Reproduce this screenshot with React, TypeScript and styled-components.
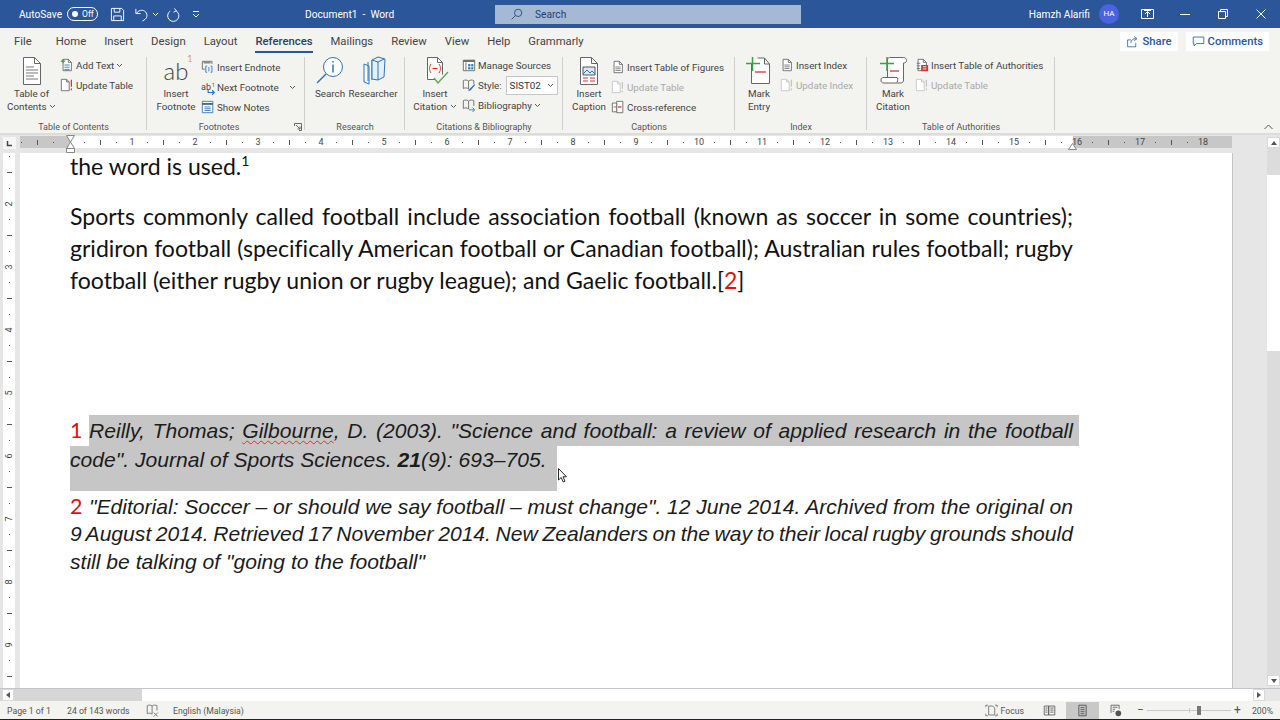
import React from 'react'
import styled, { createGlobalStyle } from 'styled-components'

const GlobalStyle = createGlobalStyle`
  html, body { margin: 0; padding: 0; background: #e6e6e6; overflow: hidden; }
  * { box-sizing: border-box; }
`

const UI_FONT = `Roboto, "Open Sans", "Liberation Sans", sans-serif`

const Chevron = ({ color = '#555' }: { color?: string }) => (
  <ChevronSvg viewBox="0 0 7 5" width="7" height="5">
    <path d="M1 1l2.500 2.500L6 1" fill="none" stroke={color} strokeWidth="1" />
  </ChevronSvg>
)

const Ico = ({ size = 14, children }: { size?: number; children: React.ReactNode }) => (
  <IconSvg viewBox="0 0 16 16" width={size} height={size} fill="none" strokeWidth="1">
    {children}
  </IconSvg>
)

const BigIco = ({ children }: { children: React.ReactNode }) => (
  <IconSvg viewBox="0 0 32 32" width="32" height="32" fill="none" strokeWidth="1">
    {children}
  </IconSvg>
)

const PageShape = ({ stroke = '#666' }: { stroke?: string }) => (
  <>
    <path d="M3.500 1.500h6l3.500 3.500v9.500h-9.500z" fill="#fff" stroke={stroke} />
    <path d="M9.500 1.500v3.500h3.500" stroke={stroke} />
  </>
)

const UpdateIcon = ({ off }: { off?: boolean }) => (
  <Ico>
    <path d="M1.500 1.500h6l3 3v10h-9z" fill="#fff" stroke={off ? '#c4c4c4' : '#666'} />
    <path d="M7.500 1.500v3h3" stroke={off ? '#c4c4c4' : '#666'} />
    <path d="M13 2v8M13 12v2" stroke={off ? '#c4c4c4' : '#d13438'} strokeWidth="1.400" />
  </Ico>
)

const LinesIcon = () => (
  <Ico>
    <PageShape />
    <path d="M5 8h6M5 10h6M5 12h6" stroke="#777" />
  </Ico>
)

const groups = {
  tabs: ['File', 'Home', 'Insert', 'Design', 'Layout', 'References', 'Mailings', 'Review', 'View', 'Help', 'Grammarly']
}

const TitleArea = () => (
  <TitleBar>
    <QuickAccess>
      <span>AutoSave</span>
      <Toggle>
        <Knob />
        Off
      </Toggle>
      <QuickIcon $left={12}>
        <Ico size={15}>
          <path d="M1.500 1.500h11l2 2v11h-13z M4.500 1.500v4h6v-4 M4 14.500v-5h8v5" stroke="#fff" />
        </Ico>
      </QuickIcon>
      <QuickIcon $left={9}>
        <Ico size={15}>
          <path d="M2 2v5h5" stroke="#fff" />
          <path d="M2.500 7c2-3.500 6-4.500 9-2.500s3 6.500.5 8.500L9 15" stroke="#fff" />
        </Ico>
      </QuickIcon>
      <QuickIcon $left={3}>
        <Chevron color="#fff" />
      </QuickIcon>
      <QuickIcon $left={7}>
        <Ico size={15}>
          <path d="M9 1.500l2 2.500-3 1.500" stroke="#fff" />
          <path d="M10.500 4a6 6 0 1 1-6 .3" stroke="#fff" />
        </Ico>
      </QuickIcon>
      <QuickIcon $left={11}>
        <IconSvg viewBox="0 0 8 8" width="8" height="8" fill="none">
          <path d="M1 1.500h6M1 4l3 3 3-3" stroke="#fff" />
        </IconSvg>
      </QuickIcon>
    </QuickAccess>
    <DocTitle>Document1&nbsp; -&nbsp; Word</DocTitle>
    <SearchBox>
      <Ico size={13}>
        <circle cx="10" cy="6" r="4.500" stroke="#1f3f73" />
        <path d="M6.800 9.200L2 14" stroke="#1f3f73" />
      </Ico>
      Search
    </SearchBox>
    <TitleSpacer />
    <UserName>Hamzh Alarifi</UserName>
    <Avatar>HA</Avatar>
    <WindowButton>
      <IconSvg viewBox="0 0 13 11" width="13" height="11" fill="none">
        <path d="M.5.500h12v9H.5z" stroke="#fff" />
        <path d="M6.500 8V3M4 5l2.500-2.500L9 5M3 1.500h7" stroke="#fff" />
      </IconSvg>
    </WindowButton>
    <WindowButton>
      <IconSvg viewBox="0 0 10 10" width="10" height="10">
        <path d="M0 5.500h10" stroke="#fff" />
      </IconSvg>
    </WindowButton>
    <WindowButton>
      <IconSvg viewBox="0 0 10 10" width="10" height="10" fill="none">
        <path d="M.5 2.500h7v7h-7zM2.500 2.500v-2h7v7h-2" stroke="#fff" />
      </IconSvg>
    </WindowButton>
    <WindowButton>
      <IconSvg viewBox="0 0 10 10" width="10" height="10">
        <path d="M.5.500l9 9M9.500.500l-9 9" stroke="#fff" />
      </IconSvg>
    </WindowButton>
  </TitleBar>
)

const TabArea = () => (
  <TabBar>
    {groups.tabs.map(t => (
      <Tab key={t} $active={t === 'References'} $file={t === 'File'}>
        {t}
      </Tab>
    ))}
    <TitleSpacer />
    <ShareButton>
      <Ico size={13}>
        <path d="M2 6h4M2 6v8.500h10V10" stroke="#2b579a" />
        <path d="M6 10c0-4 3-5.500 6-5.500M10 2l3.500 2.500L10 7" stroke="#2b579a" />
      </Ico>
      Share
    </ShareButton>
    <ShareButton>
      <Ico size={13}>
        <path d="M1.500 2.500h13v8h-9l-3 3v-3h-1z" stroke="#2b579a" />
      </Ico>
      Comments
    </ShareButton>
  </TabBar>
)

const RibbonArea = () => (
  <Ribbon>
    <Group $width={147}>
      <GroupBody $pad={8}>
        <LargeButton $width={47}>
          <BigIco>
            <path d="M7.500 2.500h11l6 6v21h-17z" fill="#fff" stroke="#666" />
            <path d="M18.500 2.500v6h6" stroke="#666" />
            <path d="M10 12h8M10 15h12M10 18h12M10 21h8M10 24h12" stroke="#777" />
          </BigIco>
          <LargeLabel>
            Table of
            <br />
            Contents <Chevron />
          </LargeLabel>
        </LargeButton>
        <SmallColumn $top={1} $left={5}>
          <SmallRow>
            <Ico>
              <PageShape />
              <path d="M5 8h6M5 10.500h6M5 13h6" stroke="#2e75b6" />
              <path d="M1 3.500h5M3.500 1v5" stroke="#3b9c4a" strokeWidth="1.300" />
            </Ico>
            Add Text <Chevron />
          </SmallRow>
          <SmallRow>
            <UpdateIcon />
            Update Table
          </SmallRow>
        </SmallColumn>
      </GroupBody>
      <GroupLabel>Table of Contents</GroupLabel>
    </Group>

    <Group $width={158}>
      <GroupBody $pad={8}>
        <LargeButton $width={42}>
          <AbGlyph>
            ab<AbMark>1</AbMark>
          </AbGlyph>
          <LargeLabel>
            Insert
            <br />
            Footnote
          </LargeLabel>
        </LargeButton>
        <SmallColumn $top={3}>
          <SmallRow>
            <Ico>
              <path d="M1.500 1.500h11v3M1.500 1.500v9h3" stroke="#666" />
              <path d="M3 3h8" stroke="#888" strokeWidth="2" />
              <path d="M7 7H5.500v7H7M11 7h1.500v7H11" stroke="#2e75b6" />
              <path d="M9 8v5" stroke="#2e75b6" />
            </Ico>
            Insert Endnote
          </SmallRow>
          <SmallRow>
            <SmallAb>
              ab<SmallAbMark>1</SmallAbMark>
              <Ico size={9}>
                <path d="M2 2v6h10M9 4l4 4-4 4" stroke="#2e75b6" strokeWidth="2" />
              </Ico>
            </SmallAb>
            Next Footnote
            <NextChevron>
              <Chevron />
            </NextChevron>
          </SmallRow>
          <SmallRow>
            <Ico>
              <path d="M1.500 1.500h12v13h-12z" fill="#fff" stroke="#2e75b6" />
              <path d="M1.500 4.500h12" stroke="#555" strokeWidth="2" />
              <path d="M4 8h7M4 10h7M4 12h7" stroke="#2e75b6" />
            </Ico>
            Show Notes
          </SmallRow>
        </SmallColumn>
      </GroupBody>
      <GroupLabel $shift={14}>Footnotes</GroupLabel>
      <Launcher>
        <IconSvg viewBox="0 0 8 8" width="8" height="8" fill="none">
          <path d="M.5 3V.5h7v7H5M2 2l4 4M6 3.500V6H3.500" stroke="#666" />
        </IconSvg>
      </Launcher>
    </Group>

    <Group $width={100}>
      <GroupBody $pad={9}>
        <LargeButton $width={32}>
          <BigIco>
            <circle cx="19" cy="12" r="9.500" stroke="#2e75b6" fill="#fff" />
            <path d="M12 19L3 28" stroke="#2e75b6" strokeWidth="1.500" />
            <path d="M19 9.500v8M19 6v1.500" stroke="#2e75b6" strokeWidth="1.500" />
          </BigIco>
          <LargeLabel>Search</LargeLabel>
        </LargeButton>
        <LargeButton $width={52} $left={1}>
          <BigIco>
            <path d="M7 9v18l5 2V11z" fill="#fff" stroke="#2e75b6" />
            <path d="M11 7v19M15 5v20" stroke="#2e75b6" />
            <path d="M15 5l6-3 7 2-1 18-6 3-6-1zM21 7l6-3M21 7v18M15 5l6 2" fill="#e4f0fa" stroke="#2e75b6" />
          </BigIco>
          <LargeLabel>Researcher</LargeLabel>
        </LargeButton>
      </GroupBody>
      <GroupLabel>Research</GroupLabel>
    </Group>

    <Group $width={158}>
      <GroupBody $pad={7}>
        <LargeButton $width={46}>
          <BigIco>
            <path d="M8.500 2.500h10l5 5v12M8.500 2.500v22h8" fill="#fff" stroke="#666" />
            <path d="M18.500 2.500v5h5" stroke="#666" />
            <path d="M12 9c-2 3-2 6 0 9M20 9c2 3 2 6 0 9M13.500 13.500h5" stroke="#d13438" />
            <path d="M15 23l4 5 10-11" stroke="#5aa85f" strokeWidth="1.300" />
          </BigIco>
          <LargeLabel>
            Insert
            <br />
            Citation <Chevron />
          </LargeLabel>
        </LargeButton>
        <SmallColumn $top={1}>
          <SmallRow>
            <Ico>
              <path d="M1.500 2.500h13v12h-13z" fill="#fff" stroke="#666" />
              <path d="M1.500 3.500h13" stroke="#666" strokeWidth="2" />
              <path d="M4.500 5v9" stroke="#666" />
              <path d="M7 7h6v6H7z" fill="#2e75b6" />
              <path d="M10 7v6M7 10h6" stroke="#fff" />
            </Ico>
            Manage Sources
          </SmallRow>
          <SmallRow>
            <Ico>
              <path d="M1.500 3c2-1 4-1 6 .5v9c-2-1.500-4-1.500-6-.5zM7.500 3.500c2-1.500 4-1.500 6-.5v4" stroke="#666" />
              <path d="M14 7l-6 6-1 2 3-1 5-6z" fill="#2e75b6" />
            </Ico>
            Style:
            <StyleSelect>
              SIST02
              <Chevron />
            </StyleSelect>
          </SmallRow>
          <SmallRow>
            <Ico>
              <path d="M1.500 3c2-1 4-1 6 .5v9c-2-1.500-4-1.500-6-.5zM7.500 3.500c2-1.500 4-1.500 6-.5v6" stroke="#666" />
              <path d="M8 13.500h6M12 11l2.500 2.500L12 16" stroke="#2e75b6" />
            </Ico>
            Bibliography <Chevron />
          </SmallRow>
        </SmallColumn>
      </GroupBody>
      <GroupLabel>Citations &amp; Bibliography</GroupLabel>
    </Group>

    <Group $width={172}>
      <GroupBody $pad={7}>
        <LargeButton $width={38}>
          <BigIco>
            <path d="M7.500 2.500h11l6 6v21h-17z" fill="#fff" stroke="#666" />
            <path d="M18.500 2.500v6h6" stroke="#666" />
            <path d="M10 12h12v8H10z" fill="#dbe8f5" stroke="#555" />
            <path d="M10 19l4-4 3 3 2-2 3 3" stroke="#2e75b6" />
            <path d="M10 23h5M17 23h5M10 26h5M17 26h5" stroke="#d13438" />
          </BigIco>
          <LargeLabel>
            Insert
            <br />
            Caption
          </LargeLabel>
        </LargeButton>
        <SmallColumn $top={3} $left={3}>
          <SmallRow>
            <LinesIcon />
            Insert Table of Figures
          </SmallRow>
          <SmallRow $off>
            <UpdateIcon off />
            Update Table
          </SmallRow>
          <SmallRow>
            <Ico>
              <path d="M6.500 1.500h7v13h-7z" fill="#fff" stroke="#666" />
              <path d="M1.500 3.500h5v10h-5z" fill="#fff" stroke="#666" />
              <path d="M8 8h4" stroke="#d13438" strokeWidth="1.500" />
              <path d="M3 8h3" stroke="#d13438" />
            </Ico>
            Cross-reference
          </SmallRow>
        </SmallColumn>
      </GroupBody>
      <GroupLabel>Captions</GroupLabel>
    </Group>

    <Group $width={132}>
      <GroupBody $pad={8}>
        <LargeButton $width={32}>
          <BigIco>
            <path d="M8.500 8.500v20h18V9l-5-6h-7" fill="#fff" stroke="#666" />
            <path d="M21.500 3v6h5" stroke="#666" />
            <path d="M3 8.500h14M9.500 2v14" stroke="#3b9c4a" strokeWidth="1.500" />
            <path d="M12 17h11" stroke="#d13438" strokeWidth="1.300" />
          </BigIco>
          <LargeLabel>
            Mark
            <br />
            Entry
          </LargeLabel>
        </LargeButton>
        <SmallColumn $top={1} $left={5}>
          <SmallRow>
            <LinesIcon />
            Insert Index
          </SmallRow>
          <SmallRow $off>
            <UpdateIcon off />
            Update Index
          </SmallRow>
        </SmallColumn>
      </GroupBody>
      <GroupLabel>Index</GroupLabel>
    </Group>

    <Group $width={188}>
      <GroupBody $pad={8}>
        <LargeButton $width={36}>
          <BigIco>
            <path d="M10.500 5c0-2 1-2.500 2-2.500h14c2 0 3 1.500 3 3s-1 2.500-3 2.500v17c0 2-1 3-3 3H7c-2 0-3-1-3-3s1-2.500 3-2.500h13c1 0 1 3 0 5" fill="#fff" stroke="#666" />
            <path d="M10.500 5v18" stroke="#666" />
            <path d="M3 8.500h14M10 2v14" stroke="#3b9c4a" strokeWidth="1.500" />
            <path d="M13 16h9" stroke="#d13438" strokeWidth="1.300" />
          </BigIco>
          <LargeLabel>
            Mark
            <br />
            Citation
          </LargeLabel>
        </LargeButton>
        <SmallColumn $top={1} $left={4}>
          <SmallRow>
            <Ico>
              <PageShape />
              <path d="M2 6h4M2 9h4M2 12h4" stroke="#666" />
              <path d="M7 8h8v7H7z" fill="#d13438" />
              <path d="M9 10h4M9 12.500h4" stroke="#fff" />
            </Ico>
            Insert Table of Authorities
          </SmallRow>
          <SmallRow $off>
            <UpdateIcon off />
            Update Table
          </SmallRow>
        </SmallColumn>
      </GroupBody>
      <GroupLabel>Table of Authorities</GroupLabel>
    </Group>

    <RibbonCollapse>
      <IconSvg viewBox="0 0 9 6" width="9" height="6" fill="none">
        <path d="M.5 5L4.500 1 8.500 5" stroke="#555" />
      </IconSvg>
    </RibbonCollapse>
  </Ribbon>
)

// one entry per quarter unit, the whole numbers carry their label
const marksFrom = (first: number, count: number) =>
  Array.from({ length: count }, (_, i) => {
    const pos = first + i
    if (pos % 4 === 0) return pos === 0 ? '' : String(Math.abs(pos / 4))
    return Math.abs(pos % 4) === 2 ? 'tick' : 'dot'
  })

const RulerMarks = ({ marks, vertical }: { marks: string[]; vertical?: boolean }) => (
  <>
    {marks.map((m, i) => (
      <RulerSlot key={i} $vertical={vertical}>
        {m === 'tick' && <RulerTick $vertical={vertical} />}
        {m === 'dot' && <RulerDot />}
        {m !== 'tick' && m !== 'dot' && <RulerNumber $vertical={vertical}>{m}</RulerNumber>}
      </RulerSlot>
    ))}
  </>
)

const FootnoteOne = () => (
  <>
    <SelectedRow>
      <NoteMark>1</NoteMark>
      <SelectedFirst>
        Reilly, Thomas; <Misspelt>Gilbourne</Misspelt>, D. (2003). "Science and football: a review of applied research in the football
      </SelectedFirst>
    </SelectedRow>
    <SelectedSecond>
      code". Journal of Sports Sciences. <strong>21</strong>(9): 693–705.
      <Pointer viewBox="0 0 9 15" width="9" height="15">
        <path d="M.5.500v11.500l2.700-2.500 2 4.500 1.800-.8-2-4.400h3.500z" fill="#fff" stroke="#111" strokeWidth="0.900" />
      </Pointer>
    </SelectedSecond>
  </>
)

const DocumentPage = () => (
  <Page>
    <FirstLine>
      the word is used.<Super>1</Super>
    </FirstLine>
    <BodyLine $justify>
      Sports commonly called football include association football (known as soccer in some countries);
    </BodyLine>
    <BodyLine $justify>
      gridiron football (specifically American football or Canadian football); Australian rules football; rugby
    </BodyLine>
    <BodyLine>
      football (either rugby union or rugby league); and Gaelic football.[<RedNumber>2</RedNumber>]
    </BodyLine>
    <FootnoteBlock>
      <FootnoteOne />
      <NoteLine $justify>
        <NoteMark>2</NoteMark>
        <em>"Editorial: Soccer – or should we say football – must change". 12 June 2014. Archived from the original on</em>
      </NoteLine>
      <NoteLine $justify>
        <em>9 August 2014. Retrieved 17 November 2014. New Zealanders on the way to their local rugby grounds should</em>
      </NoteLine>
      <NoteLine>
        <em>still be talking of "going to the football"</em>
      </NoteLine>
    </FootnoteBlock>
  </Page>
)

const StatusArea = () => (
  <StatusBar>
    <StatusText $width={60}>Page 1 of 1</StatusText>
    <StatusText $width={79}>24 of 143 words</StatusText>
    <StatusIcon $width={27}>
      <Ico size={13}>
        <path d="M1.500 2c2-1 4-1 6 .5v10c-2-1.500-4-1.500-6-.5zM7.500 2.500c2-1.500 4-1.500 6-.5v6" stroke="#666" />
        <path d="M9.500 10.500l5 5M14.500 10.500l-5 5" stroke="#666" />
      </Ico>
    </StatusIcon>
    <StatusText>English (Malaysia)</StatusText>
    <TitleSpacer />
    <FocusItem>
      <Ico size={13}>
        <path d="M1 4V1.500h2.500M15 4V1.500h-2.500M1 12v2.500h2.500M15 12v2.500h-2.500" stroke="#666" />
        <path d="M4.500 2.500h5l2.500 2.500v8.500H4.500z" stroke="#666" />
      </Ico>
      Focus
    </FocusItem>
    <ViewButton>
      <Ico size={13}>
        <path d="M1.500 2.500h5.500v11H1.500zM7 2.500h7.500v11H7zM3 5h2.500M3 7.500h2.500M3 10h2.500M9 5h4M9 7.500h4M9 10h4" stroke="#555" />
      </Ico>
    </ViewButton>
    <ViewButton $active>
      <Ico size={13}>
        <path d="M3.500 1.500h9v13h-9zM5.500 4.500h5M5.500 7h5M5.500 9.500h5M5.500 12h5" stroke="#444" />
      </Ico>
    </ViewButton>
    <ViewButton>
      <Ico size={13}>
        <path d="M2.500 11V1.500h10V6M4.500 4h6M4.500 6.500h3M4.500 9h2" stroke="#555" />
        <circle cx="11.500" cy="11.500" r="3.500" fill="#555" />
      </Ico>
    </ViewButton>
    <ZoomSign $left={4}>−</ZoomSign>
    <ZoomTrack>
      <ZoomThumb />
    </ZoomTrack>
    <ZoomSign>+</ZoomSign>
    <ZoomValue>200%</ZoomValue>
  </StatusBar>
)

const App: React.FunctionComponent = () => (
  <Window>
    <GlobalStyle />
    <TitleArea />
    <TabArea />
    <RibbonArea />
    <RibbonEdge />
    <Workspace>
      <WorkColumn>
        <RulerRow>
          <TabStopCorner>
            <IconSvg viewBox="0 0 7 7" width="7" height="7" fill="none">
              <path d="M1.500 1v4.500H6" stroke="#444" strokeWidth="1.500" />
            </IconSvg>
          </TabStopCorner>
          <RulerStrip>
            <RulerInner>
              <RulerMarks marks={marksFrom(-3, 76)} />
            </RulerInner>
            <IndentLeft viewBox="0 0 9 18" width="9" height="18">
              <path d="M.5.500h8L4.500 7zM4.500 7l4 6.500h-8zM.5 13.500h8v4h-8z" fill="#fff" stroke="#888" />
            </IndentLeft>
            <IndentRight viewBox="0 0 9 7" width="9" height="7">
              <path d="M4.500.500l4 6h-8z" fill="#fff" stroke="#888" />
            </IndentRight>
          </RulerStrip>
        </RulerRow>
        <DocRow>
          <SideRuler>
            <SideRulerInner>
              <RulerMarks marks={marksFrom(5, 34)} vertical />
            </SideRulerInner>
          </SideRuler>
          <DocumentPage />
        </DocRow>
      </WorkColumn>
      <VScroll>
        <ScrollButton>
          <ArrowUp />
        </ScrollButton>
        <VTrack>
          <VThumb />
        </VTrack>
        <ScrollButton>
          <ArrowDown />
        </ScrollButton>
      </VScroll>
    </Workspace>
    <HScroll>
      <HButton>
        <ArrowLeft />
      </HButton>
      <HThumb />
      <HButton>
        <ArrowRight />
      </HButton>
    </HScroll>
    <StatusArea />
  </Window>
)

const Window = styled.div`
  width: 1280px;
  height: 720px;
  display: flex;
  flex-direction: column;
  overflow: hidden;
  font-family: ${UI_FONT};
  background: #e6e6e6;
  border-bottom: 1px solid #222;
`

const IconSvg = styled.svg`
  display: block;
  flex: none;
`

const ChevronSvg = styled.svg`
  display: inline-block;
  flex: none;
  vertical-align: 1px;
`

const TitleBar = styled.div`
  height: 28px;
  flex: none;
  display: flex;
  align-items: center;
  background: #2b579a;
  color: #fff;
  font-size: 10.2px;
`

const QuickAccess = styled.div`
  width: 305px;
  padding-left: 19px;
  display: flex;
  align-items: center;
`

const Toggle = styled.span`
  width: 31px;
  height: 14px;
  margin-left: 5px;
  padding-left: 14px;
  border: 1px solid #fff;
  border-radius: 7px;
  position: relative;
  font-size: 8.5px;
  line-height: 12px;
`

const Knob = styled.span`
  position: absolute;
  left: 4px;
  top: 3px;
  width: 6px;
  height: 6px;
  border-radius: 50%;
  background: #fff;
`

const QuickIcon = styled.span<{ $left: number }>`
  margin-left: ${p => p.$left}px;
  display: flex;
`

const DocTitle = styled.div`
  width: 190px;
  white-space: nowrap;
`

const SearchBox = styled.div`
  width: 306px;
  height: 19px;
  padding-left: 15px;
  display: flex;
  align-items: center;
  gap: 12px;
  background: #a5b9d5;
  color: #1f3f73;
`

const TitleSpacer = styled.div`
  flex: 1;
`

const UserName = styled.div`
  white-space: nowrap;
`

const Avatar = styled.div`
  width: 20px;
  height: 20px;
  margin: 0 9px;
  border-radius: 50%;
  background: #4a63e0;
  font-size: 8px;
  line-height: 20px;
  text-align: center;
`

const WindowButton = styled.div`
  width: 38px;
  height: 28px;
  display: flex;
  align-items: center;
  justify-content: center;
`

const TabBar = styled.div`
  height: 26px;
  flex: none;
  display: flex;
  align-items: center;
  padding: 0 11px 0 14px;
  gap: 18px;
  background: #f3f3ef;
`

const Tab = styled.div<{ $active?: boolean; $file?: boolean }>`
  height: 24px;
  margin-right: ${p => (p.$file ? 6 : 0)}px;
  font-size: 11.3px;
  line-height: 26px;
  white-space: nowrap;
  color: ${p => (p.$active ? '#2f3f5c' : '#444')};
  font-weight: ${p => (p.$active ? 500 : 400)};
  border-bottom: 2px solid ${p => (p.$active ? '#2b579a' : 'transparent')};
`

const ShareButton = styled.div`
  height: 19px;
  margin-left: -10px;
  padding: 0 6px;
  display: flex;
  align-items: center;
  gap: 3px;
  background: #fff;
  color: #2b579a;
  font-size: 11.3px;
  font-weight: 500;
`

const Ribbon = styled.div`
  height: 79px;
  flex: none;
  display: flex;
  position: relative;
  background: #f3f3ef;
  color: #444;
  font-size: 9.8px;
`

const Group = styled.div<{ $width: number }>`
  width: ${p => p.$width}px;
  flex: none;
  display: flex;
  flex-direction: column;
  position: relative;
  &::after {
    content: '';
    position: absolute;
    right: 0;
    top: 3px;
    bottom: 3px;
    width: 1px;
    background: #cfcfcb;
  }
`

const GroupBody = styled.div<{ $pad: number }>`
  height: 67px;
  padding-left: ${p => p.$pad}px;
  display: flex;
`

const GroupLabel = styled.div<{ $shift?: number }>`
  height: 12px;
  padding-right: ${p => p.$shift || 0}px;
  text-align: center;
  font-size: 9px;
  line-height: 12px;
  color: #555;
  white-space: nowrap;
`

const Launcher = styled.span`
  position: absolute;
  right: 3px;
  bottom: 2px;
`

const LargeButton = styled.div<{ $width: number; $left?: number }>`
  width: ${p => p.$width}px;
  margin-left: ${p => p.$left || 0}px;
  flex: none;
  display: flex;
  flex-direction: column;
  align-items: center;
  height: 66px;
  padding-top: 1px;
`

const LargeLabel = styled.div`
  line-height: 13px;
  text-align: center;
  white-space: nowrap;
`

const AbGlyph = styled.div`
  height: 32px;
  font-family: Lato, sans-serif;
  font-weight: 300;
  font-size: 24px;
  line-height: 32px;
  color: #444;
  position: relative;
`

const AbMark = styled.span`
  position: absolute;
  top: -3px;
  right: -4px;
  font-size: 9px;
  line-height: 14px;
  color: #d13438;
`

const SmallColumn = styled.div<{ $top: number; $left?: number }>`
  margin-top: ${p => p.$top}px;
  margin-left: ${p => (p.$left === undefined ? 4 : p.$left)}px;
  display: flex;
  flex-direction: column;
`

const SmallRow = styled.div<{ $off?: boolean }>`
  height: 20px;
  display: flex;
  align-items: center;
  gap: 2px;
  white-space: nowrap;
  color: ${p => (p.$off ? '#a9a9a9' : '#444')};
  position: relative;
`

const SmallAb = styled.span`
  width: 14px;
  font-size: 9px;
  line-height: 10px;
  position: relative;
  color: #444;
  & > svg {
    position: absolute;
    right: -1px;
    bottom: -5px;
  }
`

const SmallAbMark = styled.span`
  position: absolute;
  top: -2px;
  right: 0;
  font-size: 6px;
  color: #d13438;
`

const NextChevron = styled.span`
  margin-left: 8px;
`

const StyleSelect = styled.span`
  width: 52px;
  height: 19px;
  margin-left: 2px;
  padding: 0 3px;
  display: flex;
  align-items: center;
  justify-content: space-between;
  background: #fff;
  border: 1px solid #c6c6c6;
  color: #333;
`

const RibbonCollapse = styled.span`
  position: absolute;
  right: 7px;
  bottom: 3px;
`

const RibbonEdge = styled.div`
  height: 2px;
  flex: none;
  background: #dcdcd8;
`

const Workspace = styled.div`
  flex: 1;
  min-height: 0;
  display: flex;
  position: relative;
`

const WorkColumn = styled.div`
  flex: 1;
  min-width: 0;
  display: flex;
  flex-direction: column;
`

const RulerRow = styled.div`
  height: 18px;
  flex: none;
  display: flex;
  padding: 1px 0 0 3px;
`

const TabStopCorner = styled.div`
  width: 13px;
  height: 12px;
  margin: 1px 4px 0 0;
  display: flex;
  align-items: center;
  justify-content: center;
  background: #f6f6f6;
`

const RulerStrip = styled.div`
  width: 1212px;
  height: 12px;
  position: relative;
  background: linear-gradient(to right, #c7c7c7 50px, #fff 50px, #fff 1053px, #c7c7c7 1053px);
`

const RulerInner = styled.div`
  height: 12px;
  display: flex;
  overflow: hidden;
  & > :first-child {
    margin-left: -6px;
  }
`

const RulerSlot = styled.span<{ $vertical?: boolean }>`
  flex: 0 0 15.75px;
  display: flex;
  align-items: center;
  justify-content: center;
  ${p => (p.$vertical ? 'width: 12px;' : 'height: 12px;')}
`

const RulerTick = styled.span<{ $vertical?: boolean }>`
  width: ${p => (p.$vertical ? 5 : 1)}px;
  height: ${p => (p.$vertical ? 1 : 5)}px;
  background: #555;
`

const RulerDot = styled.span`
  width: 1px;
  height: 1px;
  background: #555;
`

const RulerNumber = styled.span<{ $vertical?: boolean }>`
  font-size: 9px;
  line-height: 10px;
  color: #444;
  transform: ${p => (p.$vertical ? 'rotate(-90deg)' : 'none')};
`

const IndentLeft = styled.svg`
  position: absolute;
  left: 46px;
  top: -1px;
`

const IndentRight = styled.svg`
  position: absolute;
  left: 1048px;
  top: 7px;
`

const DocRow = styled.div`
  flex: 1;
  min-height: 0;
  display: flex;
  padding-right: 34px;
`

const SideRuler = styled.div`
  width: 20px;
  flex: none;
  padding: 0 5px 0 3px;
`

const SideRulerInner = styled.div`
  height: 100%;
  background: #fff;
  overflow: hidden;
  display: flex;
  flex-direction: column;
  align-items: center;
  & > :first-child {
    margin-top: -4px;
  }
`

const Page = styled.div`
  flex: 1;
  min-width: 0;
  padding-left: 50px;
  background: #fff;
  border-right: 1px solid #c4c4c4;
  overflow: hidden;
  color: #111;
  font-family: Lato, Carlito, sans-serif;
  font-size: 23.05px;
  font-variant-ligatures: none;
`

const FirstLine = styled.div`
  height: 26px;
  line-height: 26px;
  margin-bottom: 21px;
  white-space: nowrap;
`

const Super = styled.sup`
  font-size: 14px;
  line-height: 0;
  vertical-align: 9px;
`

const BodyLine = styled.div<{ $justify?: boolean }>`
  width: 1003px;
  height: 32px;
  line-height: 32px;
  white-space: nowrap;
  ${p => (p.$justify ? 'white-space: normal; text-align: justify; text-align-last: justify;' : '')}
`

const RedNumber = styled.span`
  color: #e01010;
`

const FootnoteBlock = styled.div`
  margin-top: 119px;
  font-family: "Liberation Sans", Arial, sans-serif;
  font-style: italic;
  font-size: 21.1px;
  color: #1c1c1c;
`

const NoteMark = styled.span`
  width: 19px;
  flex: none;
  display: inline-block;
  font-family: Lato, Carlito, sans-serif;
  font-style: normal;
  font-size: 21.5px;
  color: #e01010;
  text-align: left;
`

const SelectedRow = styled.div`
  width: 1009px;
  height: 31px;
  display: flex;
  line-height: 31px;
`

const SelectedFirst = styled.div`
  flex: 1;
  padding-right: 6px;
  background: #c6c6c6;
  text-align: justify;
  text-align-last: justify;
  white-space: normal;
`

const Misspelt = styled.span`
  text-decoration: underline wavy #d13438 1px;
  text-underline-offset: 2px;
`

const SelectedSecond = styled.div`
  width: 487px;
  height: 45px;
  line-height: 27px;
  background: #c6c6c6;
  white-space: nowrap;
  position: relative;
  margin-bottom: 1px;
`

const Pointer = styled.svg`
  position: absolute;
  left: 488px;
  top: 22px;
`

const NoteLine = styled.div<{ $justify?: boolean }>`
  width: 1003px;
  height: 28px;
  line-height: 28px;
  white-space: nowrap;
  ${p => (p.$justify ? 'white-space: normal; word-spacing: -3px; text-align: justify; text-align-last: justify;' : '')}
`

const VScroll = styled.div`
  width: 13px;
  flex: none;
  padding: 2px 0;
  display: flex;
  flex-direction: column;
`

const ScrollButton = styled.div`
  height: 11px;
  flex: none;
  display: flex;
  align-items: center;
  justify-content: center;
  background: #fff;
  border: 1px solid #d8d8d8;
`

const VTrack = styled.div`
  flex: 1;
  padding-top: 27px;
  background: #dcdcdc;
`

const VThumb = styled.div`
  height: 176px;
  background: #fff;
`

const ArrowUp = styled.span`
  border: 3px solid transparent;
  border-top: 0;
  border-bottom: 4px solid #555;
`

const ArrowDown = styled.span`
  border: 3px solid transparent;
  border-bottom: 0;
  border-top: 4px solid #555;
`

const ArrowLeft = styled.span`
  border: 3px solid transparent;
  border-left: 0;
  border-right: 4px solid #555;
`

const ArrowRight = styled.span`
  border: 3px solid transparent;
  border-right: 0;
  border-left: 4px solid #555;
`

const HScroll = styled.div`
  height: 13px;
  flex: none;
  display: flex;
  padding-left: 2px;
  padding-right: 15px;
  border-top: 1px solid #c4c4c4;
  background: linear-gradient(to right, #d6d6d6 142px, transparent 142px);
`

const HButton = styled.div`
  width: 12px;
  flex: none;
  display: flex;
  align-items: center;
  justify-content: center;
  background: #fff;
  border: 1px solid #d8d8d8;
`

const HThumb = styled.div`
  flex: 1;
  margin-left: 128px;
  background: #fff;
`

const StatusBar = styled.div`
  height: 18px;
  flex: none;
  display: flex;
  align-items: center;
  padding: 1px 0 0 7px;
  background: #f3f3ef;
  color: #555;
  font-size: 8.7px;
`

const StatusText = styled.div<{ $width?: number }>`
  ${p => (p.$width ? `width: ${p.$width}px;` : '')}
  line-height: 14px;
  white-space: nowrap;
`

const StatusIcon = styled.div<{ $width: number }>`
  width: ${p => p.$width}px;
`

const FocusItem = styled.div`
  display: flex;
  align-items: center;
  gap: 2px;
  margin-right: 9px;
`

const ViewButton = styled.div<{ $active?: boolean }>`
  width: 33px;
  height: 17px;
  display: flex;
  align-items: center;
  justify-content: center;
  background: ${p => (p.$active ? '#c8c8c8' : 'transparent')};
`

const ZoomSign = styled.span<{ $left?: number }>`
  width: 9px;
  margin-left: ${p => p.$left || 0}px;
  font-size: 12px;
  line-height: 17px;
  text-align: center;
`

const ZoomTrack = styled.div`
  width: 84px;
  height: 1px;
  margin: 0 2px;
  background: #c9c9c9;
  position: relative;
  &::before {
    content: '';
    position: absolute;
    left: 42px;
    top: -2px;
    width: 1px;
    height: 5px;
    background: #c9c9c9;
  }
`

const ZoomThumb = styled.span`
  position: absolute;
  left: 50px;
  top: -4px;
  width: 4px;
  height: 9px;
  background: #777;
`

const ZoomValue = styled.span`
  margin-left: 10px;
  margin-right: 7px;
`

export default App
